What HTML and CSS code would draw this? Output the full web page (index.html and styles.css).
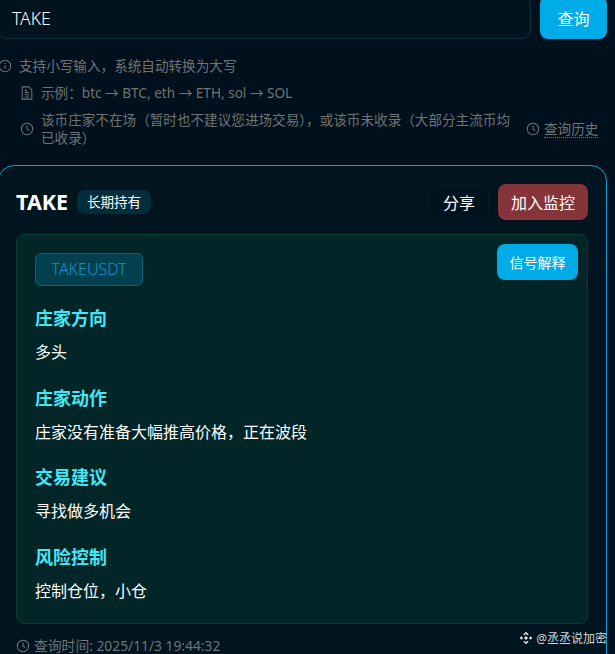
FILE: index.html
```html
<!DOCTYPE html>
<html lang="zh-CN">
<head>
  <meta charset="UTF-8">
  <title>庄家查询</title>
  <link rel="stylesheet" href="styles.css">
</head>
<body>

  <div class="page">
    <div class="search-row">
      <div class="search-input">TAKE</div>
      <button class="btn btn-search">查询</button>
    </div>

    <div class="hints">
      <div class="hint hint-first">
        <svg class="icon" viewBox="0 0 16 16"><circle cx="8" cy="8" r="6.5"/><path d="M8 7.2v4M8 4.6v1.2"/></svg>
        <span>支持小写输入，系统自动转换为大写</span>
      </div>
      <div class="hint">
        <svg class="icon" viewBox="0 0 16 16"><path d="M2.500 1h7.500l3.500 3.500V15h-11zM5.500 7.500h5M5.500 10h5M5.500 12.500h5M5.500 5h2.500"/></svg>
        <span>示例：btc → BTC, eth → ETH, sol → SOL</span>
      </div>
      <div class="hint hint-last">
        <svg class="icon" viewBox="0 0 16 16"><circle cx="8" cy="8" r="6.500"/><path d="M8 4v4.300l2.600 1.500"/></svg>
        <span class="hint-text">该币庄家不在场（暂时也不建议您进场交易），或该币未收录（大部分主流币均已收录）</span>
        <div class="history">
          <svg class="icon" viewBox="0 0 16 16"><circle cx="8" cy="8" r="6.500"/><path d="M8 4v4.300l2.600 1.500"/></svg>
          <span class="history-link">查询历史</span>
        </div>
      </div>
    </div>

    <div class="card">
      <div class="card-head">
        <div class="title">TAKE</div>
        <div class="tag">长期持有</div>
        <div class="head-actions">
          <button class="btn btn-share">分享</button>
          <button class="btn btn-watch">加入监控</button>
        </div>
      </div>

      <div class="signal">
        <button class="btn btn-explain">信号解释</button>
        <div class="pair">TAKEUSDT</div>

        <h3>庄家方向</h3>
        <p>多头</p>
        <h3>庄家动作</h3>
        <p>庄家没有准备大幅推高价格，正在波段</p>
        <h3>交易建议</h3>
        <p>寻找做多机会</p>
        <h3>风险控制</h3>
        <p>控制仓位，小仓</p>
      </div>

      <div class="query-time">
        <svg class="icon" viewBox="0 0 16 16"><circle cx="8" cy="8" r="6.500"/><path d="M8 4v4.300l2.600 1.500"/></svg>
        <span>查询时间: 2025/11/3 19:44:32</span>
      </div>
    </div>
  </div>

  <div class="watermark">
    <svg class="wm-logo" viewBox="0 0 16 16"><path d="M8 .8l3 3-1.200 1.200L8 3.200 6.200 5 5 3.800zM2.700 6.100L4.600 8 2.700 9.900.8 8zM13.300 6.100L15.200 8l-1.900 1.900L11.400 8zM5 12.200L6.200 11 8 12.800 9.800 11l1.200 1.200-3 3zM8 5.700L10.300 8 8 10.300 5.700 8z"/></svg>
    <span>@丞丞说加密</span>
  </div>

</body>
</html>
```

FILE: styles.css
```css
html, body {
  margin: 0;
  height: 654px;
  overflow: hidden;
}

body {
  font-family: "Noto Sans", "Noto Sans CJK SC", sans-serif;
  background-color: #00101c;
  color: #fff;
  position: relative;
}

.page {
  margin: -4px 8px 0 -2px;
}

.search-row {
  display: flex;
  gap: 9px;
  height: 43px;
}

.search-input {
  flex: 1;
  display: flex;
  align-items: center;
  padding-left: 13px;
  font-size: 17.500px;
  font-weight: 300;
  background-color: #00141f;
  border: 1px solid #04303c;
  border-radius: 8px;
}

.btn {
  border: none;
  border-radius: 8px;
  color: #fff;
  font-family: inherit;
  font-size: 16px;
  padding: 0;
}

.btn-search {
  width: 67px;
  background-color: #00ace8;
}

.hints {
  margin-top: 18px;
  font-size: 13.600px;
  color: #6f7475;
}

.hint {
  display: flex;
  align-items: center;
  gap: 7px;
  line-height: 18px;
  margin: 9px 0 0 22px;
}

.hint-first {
  margin: 0;
}

.icon {
  width: 14px;
  height: 14px;
  flex: none;
  fill: none;
  stroke: #6f7475;
  stroke-width: 1.200;
}

.hint-last {
  margin-top: 9px;
}

.hint-text {
  width: 478px;
  flex: none;
}

.history {
  display: flex;
  align-items: center;
  gap: 4px;
  white-space: nowrap;
}

.history-link {
  border-bottom: 1px dotted #6f7475;
  line-height: 16px;
}

.card {
  margin-top: 18px;
  padding: 18px 18px 10px 17px;
  height: 520px;
  box-sizing: border-box;
  background-color: #00151f;
  border: 1px solid #0b9ed6;
  border-radius: 16px;
}

.card-head {
  display: flex;
  align-items: center;
  height: 36px;
}

.title {
  font-size: 21.500px;
  font-weight: 700;
  line-height: 36px;
}

.tag {
  margin-left: 9px;
  padding: 0 10px;
  height: 24px;
  line-height: 24px;
  font-size: 13.500px;
  background-color: #032d3b;
  border-radius: 8px;
}

.head-actions {
  margin-left: auto;
  display: flex;
  gap: 9px;
}

.btn-share {
  width: 60px;
  height: 36px;
  background-color: #00141f;
  border: 1px dotted #04262f;
}

.btn-watch {
  width: 90px;
  height: 36px;
  background-color: #85343a;
}

.signal {
  position: relative;
  margin-top: 14px;
  height: 390px;
  box-sizing: border-box;
  padding: 18px 18px 0;
  background-color: #022528;
  border: 1px solid #064031;
  border-radius: 8px;
}

.btn-explain {
  position: absolute;
  top: 9px;
  right: 9px;
  width: 81px;
  height: 36px;
  font-size: 14px;
  background-color: #00ace8;
}

.pair {
  display: inline-block;
  height: 31px;
  line-height: 31px;
  padding: 0 15.500px;
  font-size: 16px;
  font-weight: 300;
  color: #0e93d5;
  background-color: #02404f;
  border: 1px solid #0b6381;
  border-radius: 6px;
}

h3 {
  margin: 0;
  font-size: 18px;
  font-weight: 700;
  line-height: 24px;
  color: #45e6f5;
}

.pair + h3 {
  margin-top: 20px;
}

p {
  margin: 11px 0 22.500px;
  font-size: 16px;
  line-height: 22px;
}

.query-time {
  display: flex;
  align-items: center;
  gap: 4px;
  margin-top: 14px;
  font-size: 13.800px;
  line-height: 16px;
  color: #6f7475;
}

.watermark {
  position: absolute;
  right: 8px;
  top: 629px;
  display: flex;
  align-items: center;
  gap: 3px;
  font-size: 12px;
  color: #d5d8d9;
}

.wm-logo {
  width: 14px;
  height: 14px;
  fill: #e2e4e4;
}
```
